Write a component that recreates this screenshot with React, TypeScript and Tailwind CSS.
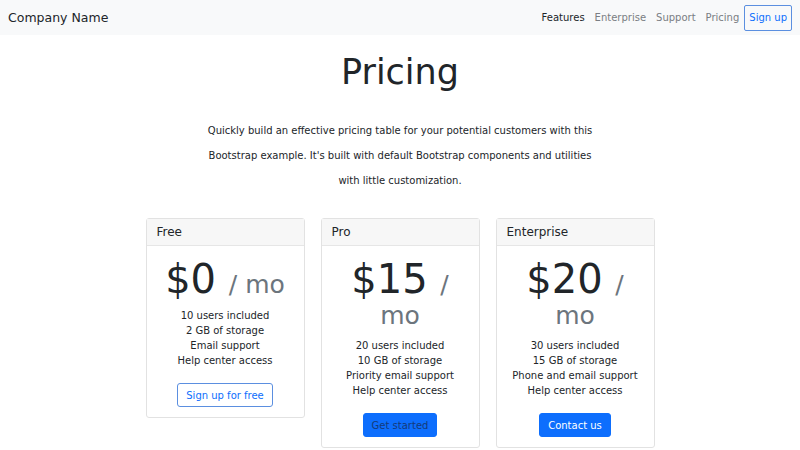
import React from "react";

const font = { fontFamily: '"DejaVu Sans", sans-serif' };

type Plan = {
  name: string;
  price: string;
  wrap: boolean;
  items: string[];
  cta: string;
  variant: "outline" | "solid" | "solidDark";
};

const plans: Plan[] = [
  {
    name: "Free",
    price: "$0",
    wrap: false,
    items: ["10 users included", "2 GB of storage", "Email support", "Help center access"],
    cta: "Sign up for free",
    variant: "outline",
  },
  {
    name: "Pro",
    price: "$15",
    wrap: true,
    items: ["20 users included", "10 GB of storage", "Priority email support", "Help center access"],
    cta: "Get started",
    variant: "solidDark",
  },
  {
    name: "Enterprise",
    price: "$20",
    wrap: true,
    items: ["30 users included", "15 GB of storage", "Phone and email support", "Help center access"],
    cta: "Contact us",
    variant: "solid",
  },
];

function Card({ p }: { p: Plan }) {
  return (
    <div className="w-[159px] border border-[#e2e2e2] rounded-[3px] bg-white flex flex-col">
      <div className="h-[27px] bg-[#f7f7f7] border-b border-[#e6e6e6] pl-[10px] flex items-center text-[12px] text-[#212529]">
        {p.name}
      </div>
      <div className="pt-[13px] pb-[10px] px-[6px] flex flex-col items-center text-center">
        <div className="text-[40px] leading-[40px] text-[#212529] mb-[9px]">
          {p.wrap ? (
            <>
              <div>
                {p.price} <span className="text-[25px] leading-[25px] text-[#6c757d]">/</span>
              </div>
              <div className="pt-[4px] text-[25px] leading-[26px] text-[#6c757d]">mo</div>
            </>
          ) : (
            <div>
              {p.price} <span className="text-[25px] leading-[25px] text-[#6c757d]">/ mo</span>
            </div>
          )}
        </div>
        <ul className="text-[10px] leading-[15px] text-[#212529]">
          {p.items.map((it) => (
            <li key={it}>{it}</li>
          ))}
        </ul>
        <div className="mt-[15px] flex">
          {p.variant === "outline" ? (
            <button className="h-[24px] px-[8px] text-[10px] text-[#0d6efd] border border-[#5b8fe0] rounded-[3px] bg-white">
              {p.cta}
            </button>
          ) : (
            <button
              className={
                "h-[24px] px-[8px] text-[10px] rounded-[3px] bg-[#0d6efd] border border-[#0d6efd] " +
                (p.variant === "solidDark" ? "text-[#143a7a]" : "text-white")
              }
            >
              {p.cta}
            </button>
          )}
        </div>
      </div>
    </div>
  );
}

export default function App() {
  return (
    <div className="w-[800px] h-[450px] bg-white overflow-hidden" style={font}>
      <nav className="h-[35px] bg-[#f8f9fa] flex items-center justify-between pl-[8px] pr-[8px]">
        <span className="text-[12.5px] leading-[18px] pt-[1px] text-[#212529]">Company Name</span>
        <div className="flex items-center text-[10px]">
          <a className="px-[5px] text-[#212529]">Features</a>
          <a className="px-[5px] text-[#7a7e83]">Enterprise</a>
          <a className="px-[5px] text-[#7a7e83]">Support</a>
          <a className="px-[5px] text-[#7a7e83]">Pricing</a>
          <button className="h-[26px] px-[4px] text-[10px] text-[#0d6efd] border border-[#5b8fe0] rounded-[2px]">
            Sign up
          </button>
        </div>
      </nav>
      <div className="flex flex-col items-center">
        <h1 className="mt-[16px] text-[35px] leading-[42px] text-[#212529]">Pricing</h1>
        <p className="mt-[25px] w-[400px] text-center text-[10px] leading-[25px] text-[#212529]">
          Quickly build an effective pricing table for your potential customers with this Bootstrap example. It's built
          with default Bootstrap components and utilities with little customization.
        </p>
        <div className="mt-[25px] flex items-start gap-[16px]">
          {plans.map((p) => (
            <Card key={p.name} p={p} />
          ))}
        </div>
      </div>
    </div>
  );
}
